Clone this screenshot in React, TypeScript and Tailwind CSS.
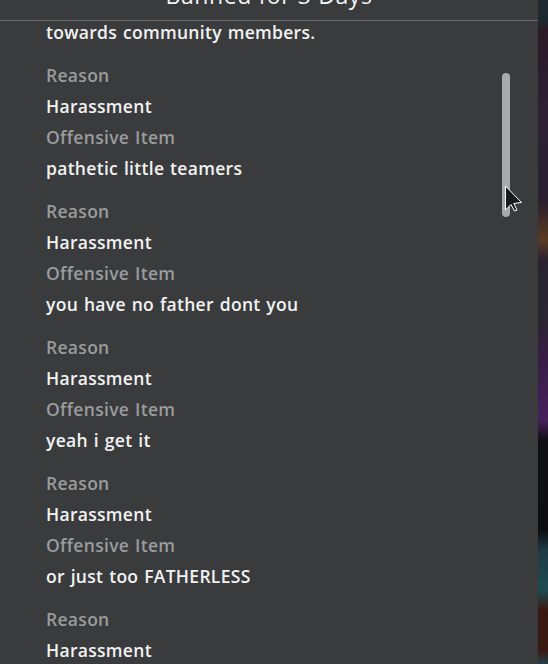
const bans = [
  { reason: 'Harassment', item: 'pathetic little teamers' },
  { reason: 'Harassment', item: 'you have no father dont you' },
  { reason: 'Harassment', item: 'yeah i get it' },
  { reason: 'Harassment', item: 'or just too FATHERLESS' },
  { reason: 'Harassment', item: 'imagine having a dad' },
]

const Entry = ({ reason, item }: { reason: string; item: string }) => (
  <div className="flex flex-col">
    <div className="h-[31px] leading-[31px] text-[#9b9c9d]">Reason</div>
    <div className="h-[31px] leading-[31px] text-[#f2f2f2]">{reason}</div>
    <div className="h-[31px] leading-[31px] text-[#9b9c9d]">Offensive Item</div>
    <div className="h-[31px] leading-[31px] text-[#f2f2f2]">{item}</div>
  </div>
)

const Cursor = () => (
  <svg className="absolute left-[504px] top-[185px]" width="20" height="28" viewBox="0 0 20 28">
    <polygon
      points="1.5,1 1.5,25 7,19.5 10.5,26 13,25 9.8,18.5 17.5,17.5"
      fill="#1a1a1a"
      stroke="#ffffff"
      strokeWidth="1"
      strokeLinejoin="miter"
    />
  </svg>
)

export default function App() {
  return (
    <div className="flex h-[664px] w-[548px] overflow-hidden bg-black" style={{ fontFamily: '"Open Sans", "Noto Sans", sans-serif' }}>
      <div className="relative flex h-full w-[538px] flex-col bg-[#393b3d]">
        <div className="relative h-[21px] shrink-0 border-b border-[#66676a]">
          <div className="absolute inset-x-0 top-[-17px] text-center text-[23px] font-medium leading-[24px] tracking-[0.6px] text-[#f4f4f4]">
            Banned for 3 Days
          </div>
        </div>
        <div className="flex-1 overflow-hidden">
          <div className="mt-[-35px] flex flex-col gap-[12px] px-[46px] text-[17.5px] font-semibold tracking-[0.3px] [word-spacing:1px]">
            <div className="flex flex-col text-[#f2f2f2]">
              <div className="h-[31px] leading-[31px]">Your account was banned for harassment</div>
              <div className="h-[31px] leading-[31px]">towards community members.</div>
            </div>
            {bans.map((b, i) => (
              <Entry key={i} reason={b.reason} item={b.item} />
            ))}
          </div>
        </div>
        <div className="absolute left-[502px] top-[73px] h-[144px] w-[8px] rounded-full bg-[#a8a9aa]" />
        <Cursor />
      </div>
      <div className="h-full w-[10px] bg-[linear-gradient(to_bottom,#1e2a30_0px,#1e2a30_20px,#2b1a26_30px,#2e2136_110px,#2a2030_200px,#5a3a22_240px,#2a2230_260px,#2a2530_320px,#3a1c48_360px,#46205a_420px,#101014_440px,#0e0e12_530px,#1e3a46_550px,#1f4a52_590px,#3a1a10_610px,#3a1a10_650px,#22404a_664px)]" />
    </div>
  )
}
